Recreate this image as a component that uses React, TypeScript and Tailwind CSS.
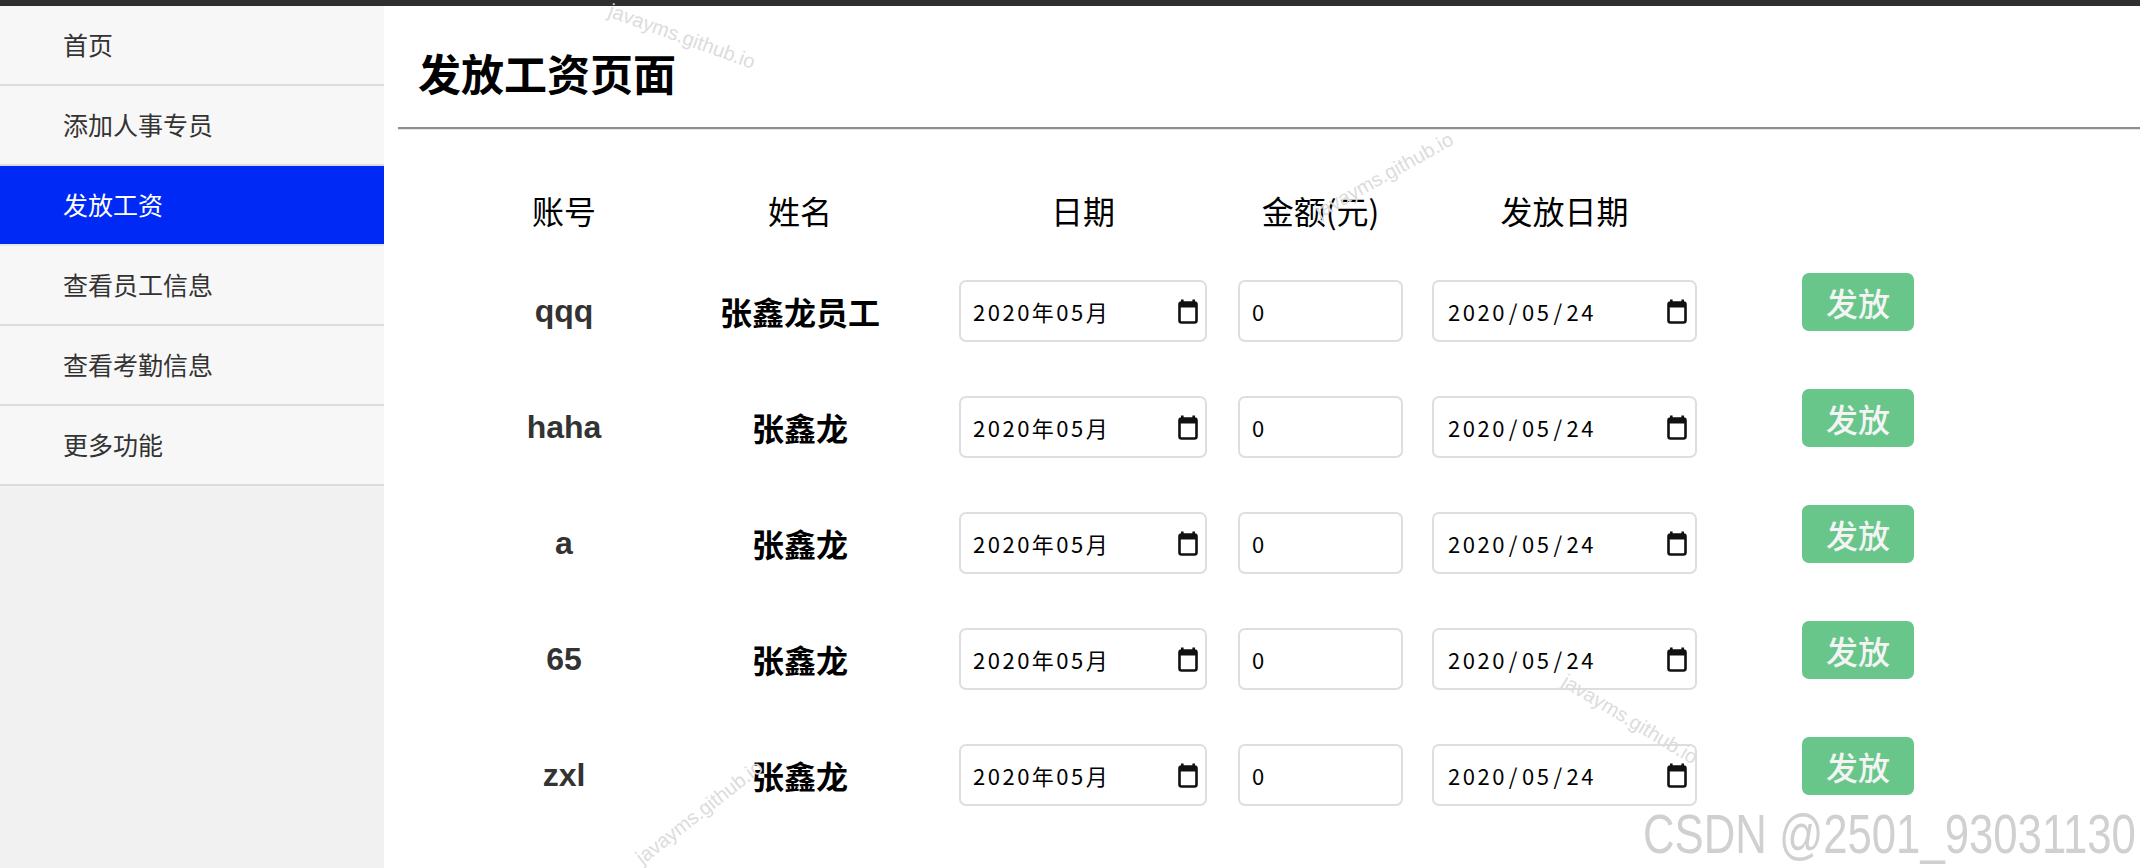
import React from 'react';

const navItems = ['首页', '添加人事专员', '发放工资', '查看员工信息', '查看考勤信息', '更多功能'];

const rows = [
  { acc: 'qqq', name: '张鑫龙员工' },
  { acc: 'haha', name: '张鑫龙' },
  { acc: 'a', name: '张鑫龙' },
  { acc: '65', name: '张鑫龙' },
  { acc: 'zxl', name: '张鑫龙' },
];

function CalendarIcon() {
  return (
    <svg width="20" height="25" viewBox="0 0 20 25" className="shrink-0">
      <rect x="3" y="0.5" width="2.6" height="4" fill="#111" />
      <rect x="14.4" y="0.5" width="2.6" height="4" fill="#111" />
      <rect x="1.5" y="3.5" width="17" height="20" rx="2" fill="none" stroke="#111" strokeWidth="2.6" />
      <rect x="1.5" y="3.5" width="17" height="5" fill="#111" />
    </svg>
  );
}

const cjk = "font-['Noto_Sans_CJK_SC',sans-serif]";

function Watermark({ className }: { className: string }) {
  return (
    <span
      className={`pointer-events-none absolute -translate-x-1/2 -translate-y-1/2 whitespace-nowrap text-[20px] text-[#dcdcdc] font-['Liberation_Sans',sans-serif] ${className}`}
    >
      javayms.github.io
    </span>
  );
}

export default function App() {
  return (
    <div className={`relative flex h-[868px] w-full flex-col overflow-hidden bg-white ${cjk}`}>
      <div className="h-[6px] shrink-0 bg-[#2f2f2f]" />
      <div className="flex min-h-0 flex-1">
        <aside className="w-[384px] shrink-0 bg-[#f1f1f1]">
          {navItems.map((item) => {
            const active = item === '发放工资';
            return (
              <div
                key={item}
                className={`flex h-[80px] items-center border-b-2 pl-[63px] text-[25px] ${
                  active
                    ? 'border-[#e8e8e8] bg-[#0029f5] text-white'
                    : 'border-[#dcdcdc] bg-[#f7f7f7] text-[#333]'
                }`}
              >
                {item}
              </div>
            );
          })}
        </aside>
        <main className="flex min-w-0 flex-1 flex-col">
          <h1 className="pl-[34px] pt-[36px] text-[43px] font-bold leading-[60px] text-black">发放工资页面</h1>
          <div className="ml-[14px] mt-[25px] h-[3px] border-t-2 border-b border-t-[#8e8e8e] border-b-[#e4e4e4]" />
          <div className="mt-[50px] flex h-[60px] items-center pl-[116px] text-[32px] text-black">
            <div className="w-[128px] text-center">账号</div>
            <div className="ml-[72px] w-[200px] text-center">姓名</div>
            <div className="ml-[59px] w-[248px] text-center">日期</div>
            <div className="ml-[31px] w-[165px] text-center">金额(元)</div>
            <div className="ml-[29px] w-[265px] text-center">发放日期</div>
          </div>
          <div className="mt-[13px] flex flex-col">
            {rows.map((r) => (
              <div key={r.acc} className="flex h-[116px] items-center pl-[116px]">
                <div className="w-[128px] text-center font-['Liberation_Sans',sans-serif] text-[32px] font-bold text-[#333]">
                  {r.acc}
                </div>
                <div className="ml-[72px] w-[200px] text-center text-[32px] font-bold text-black">{r.name}</div>
                <div className="ml-[59px] flex h-[62px] w-[248px] items-center justify-between rounded-[7px] border-2 border-[#dedede] bg-white pl-[12px] pr-[7px] text-[22px] tracking-[2.5px] text-black">
                  <span>2020年05月</span>
                  <CalendarIcon />
                </div>
                <div className="ml-[31px] flex h-[62px] w-[165px] items-center rounded-[7px] border-2 border-[#dedede] bg-white pl-[12px] text-[22px] text-black">
                  0
                </div>
                <div className="ml-[29px] flex h-[62px] w-[265px] items-center justify-between rounded-[7px] border-2 border-[#dedede] bg-white pl-[14px] pr-[8px] text-[22px] text-black">
                  <span className="tracking-[2.5px]">
                    2020<span className="mx-[2px]">/</span>05<span className="mx-[2px]">/</span>24
                  </span>
                  <CalendarIcon />
                </div>
                <button className="mb-[18px] ml-[105px] flex h-[58px] w-[112px] items-center justify-center rounded-[7px] bg-[#68c68a] text-[32px] font-medium text-[#f4f4f4]">
                  发放
                </button>
              </div>
            ))}
          </div>
        </main>
      </div>
      <Watermark className="left-[682px] top-[36px] rotate-[20deg]" />
      <Watermark className="left-[1384px] top-[175px] -rotate-[29deg]" />
      <Watermark className="left-[1630px] top-[719px] rotate-[31deg]" />
      <Watermark className="left-[699px] top-[812px] -rotate-[38deg]" />
      <div className="pointer-events-none absolute right-[4px] top-[806px] origin-right scale-x-[0.78] whitespace-nowrap font-['Liberation_Sans',sans-serif] text-[56px] leading-none text-[#d0d0d0]">
        CSDN @2501_93031130
      </div>
    </div>
  );
}
